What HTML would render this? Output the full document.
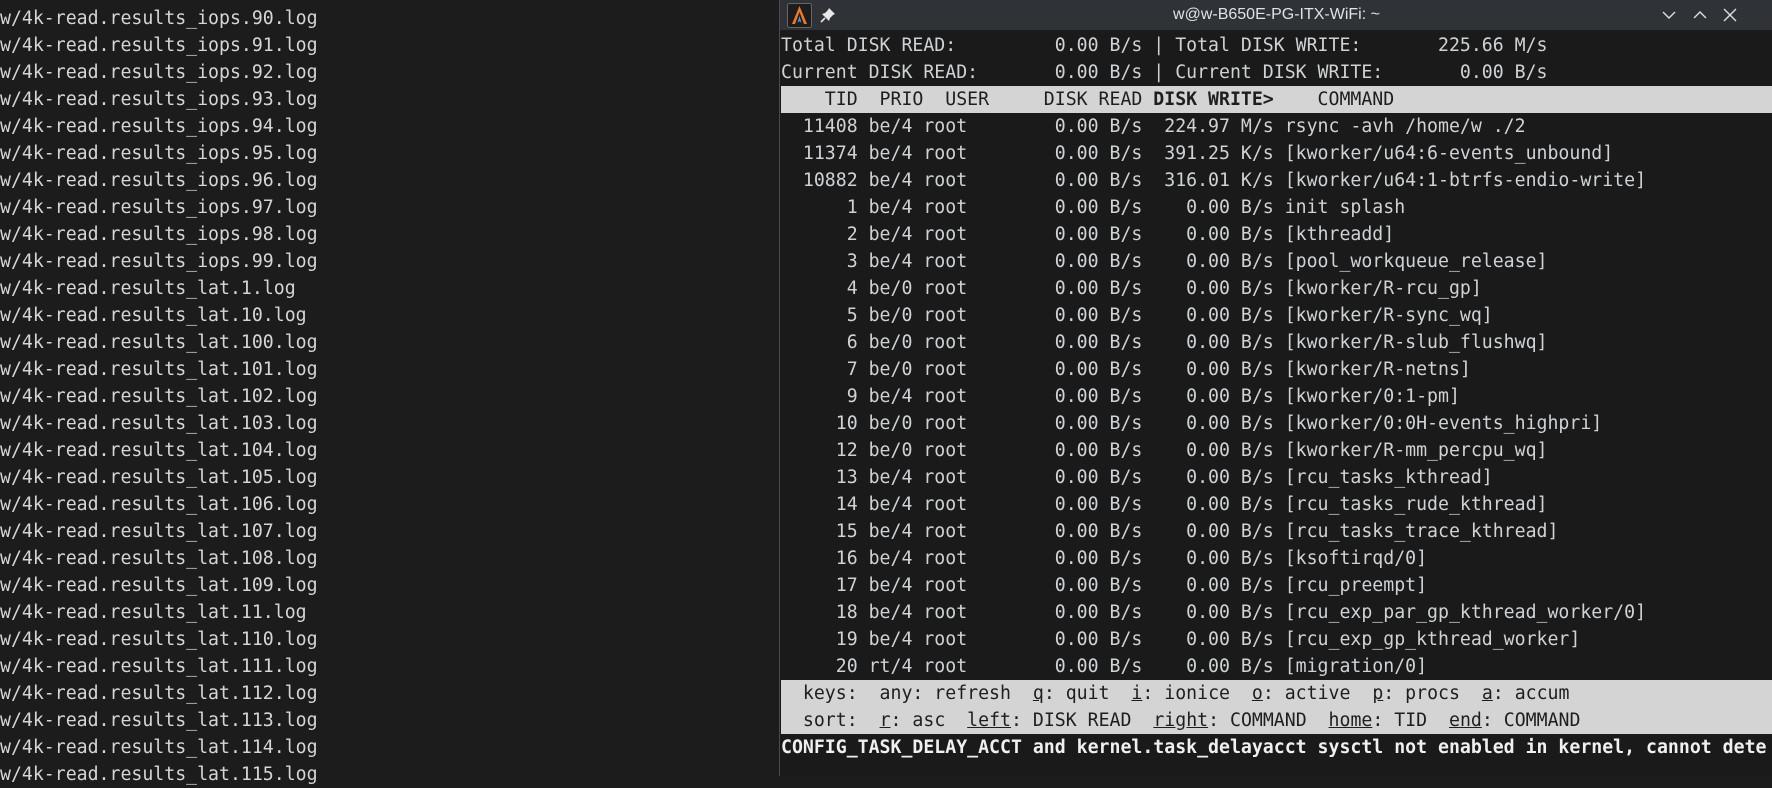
<!DOCTYPE html>
<html><head><meta charset="utf-8">
<style>
*{margin:0;padding:0;box-sizing:border-box}
html,body{width:1772px;height:776px;overflow:hidden;background:#1c1c1c}
.mono{font-family:"DejaVu Sans Mono","Liberation Mono",monospace;font-size:18.2px;white-space:pre;line-height:27px}
#left{position:absolute;left:0;top:4.5px;color:#d6d6d6}
#term{position:absolute;left:779px;top:0;width:993px;height:776px;background:#1a1a1a;border-left:1px solid #4a4a4a}
#title{position:absolute;left:0;top:0;width:993px;height:30px;background:#2f3337}
#title .t{position:absolute;left:0;width:993px;top:0;line-height:30px;text-align:center;font-family:"Liberation Sans",sans-serif;font-size:16px;color:#dfe3e6}
#body{position:absolute;left:1px;top:31.5px;width:992px;color:#cfd3d6}
.bar{background:#d4d4d4;color:#1e1e1e}
b{font-weight:bold}
.u{text-decoration:underline}
.cfg{color:#f0f0f0;font-weight:bold}
</style></head><body>
<div id="left" class="mono">w/4k-read.results_iops.90.log
w/4k-read.results_iops.91.log
w/4k-read.results_iops.92.log
w/4k-read.results_iops.93.log
w/4k-read.results_iops.94.log
w/4k-read.results_iops.95.log
w/4k-read.results_iops.96.log
w/4k-read.results_iops.97.log
w/4k-read.results_iops.98.log
w/4k-read.results_iops.99.log
w/4k-read.results_lat.1.log
w/4k-read.results_lat.10.log
w/4k-read.results_lat.100.log
w/4k-read.results_lat.101.log
w/4k-read.results_lat.102.log
w/4k-read.results_lat.103.log
w/4k-read.results_lat.104.log
w/4k-read.results_lat.105.log
w/4k-read.results_lat.106.log
w/4k-read.results_lat.107.log
w/4k-read.results_lat.108.log
w/4k-read.results_lat.109.log
w/4k-read.results_lat.11.log
w/4k-read.results_lat.110.log
w/4k-read.results_lat.111.log
w/4k-read.results_lat.112.log
w/4k-read.results_lat.113.log
w/4k-read.results_lat.114.log
w/4k-read.results_lat.115.log</div>
<div id="term">
 <div id="title">
  <svg style="position:absolute;left:7px;top:3px" width="25" height="25" viewBox="0 0 25 25">
   <rect x="0.5" y="0.5" width="24" height="24" rx="2" fill="#1d1d1d" stroke="#666"/>
   <path d="M12.5 3 L5 21 L8 21 L12.5 9 L17 21 L20 21 Z" fill="#f07820"/>
   <path d="M12.5 13 L10.5 20 L12.5 18 L14.5 20 Z" fill="#4aa0f0"/>
  </svg>
  <svg style="position:absolute;left:40px;top:7px" width="16" height="16" viewBox="0 0 16 16">
   <path d="M9 1 L15 7 L13 8 L10 11 L9 14 L2 7 L5 6 L8 3 Z" fill="#e8e8e8"/>
   <path d="M5 11 L1 15" stroke="#e8e8e8" stroke-width="1.6"/>
  </svg>
  <div class="t">w@w-B650E-PG-ITX-WiFi: ~</div>
  <svg style="position:absolute;left:881px;top:8px" width="100" height="14" viewBox="0 0 100 14">
   <path d="M2 4 L8 10 L14 4" stroke="#e0e0e0" stroke-width="1.4" fill="none"/>
   <path d="M33 10 L39 4 L45 10" stroke="#e0e0e0" stroke-width="1.4" fill="none"/>
   <path d="M63 1 L75 13 M75 1 L63 13" stroke="#e0e0e0" stroke-width="1.4" fill="none"/>
  </svg>
 </div>
 <div id="body" class="mono"><div>Total DISK READ:         0.00 B/s | Total DISK WRITE:       225.66 M/s</div><div>Current DISK READ:       0.00 B/s | Current DISK WRITE:       0.00 B/s</div><div class="bar">    TID  PRIO  USER     DISK READ <b>DISK WRITE&gt;</b>    COMMAND</div><div>  11408 be/4 root        0.00 B/s  224.97 M/s rsync -avh /home/w ./2
  11374 be/4 root        0.00 B/s  391.25 K/s [kworker/u64:6-events_unbound]
  10882 be/4 root        0.00 B/s  316.01 K/s [kworker/u64:1-btrfs-endio-write]
      1 be/4 root        0.00 B/s    0.00 B/s init splash
      2 be/4 root        0.00 B/s    0.00 B/s [kthreadd]
      3 be/4 root        0.00 B/s    0.00 B/s [pool_workqueue_release]
      4 be/0 root        0.00 B/s    0.00 B/s [kworker/R-rcu_gp]
      5 be/0 root        0.00 B/s    0.00 B/s [kworker/R-sync_wq]
      6 be/0 root        0.00 B/s    0.00 B/s [kworker/R-slub_flushwq]
      7 be/0 root        0.00 B/s    0.00 B/s [kworker/R-netns]
      9 be/4 root        0.00 B/s    0.00 B/s [kworker/0:1-pm]
     10 be/0 root        0.00 B/s    0.00 B/s [kworker/0:0H-events_highpri]
     12 be/0 root        0.00 B/s    0.00 B/s [kworker/R-mm_percpu_wq]
     13 be/4 root        0.00 B/s    0.00 B/s [rcu_tasks_kthread]
     14 be/4 root        0.00 B/s    0.00 B/s [rcu_tasks_rude_kthread]
     15 be/4 root        0.00 B/s    0.00 B/s [rcu_tasks_trace_kthread]
     16 be/4 root        0.00 B/s    0.00 B/s [ksoftirqd/0]
     17 be/4 root        0.00 B/s    0.00 B/s [rcu_preempt]
     18 be/4 root        0.00 B/s    0.00 B/s [rcu_exp_par_gp_kthread_worker/0]
     19 be/4 root        0.00 B/s    0.00 B/s [rcu_exp_gp_kthread_worker]
     20 rt/4 root        0.00 B/s    0.00 B/s [migration/0]</div><div class="bar">  keys:  any: refresh  <span class="u">q</span>: quit  <span class="u">i</span>: ionice  <span class="u">o</span>: active  <span class="u">p</span>: procs  <span class="u">a</span>: accum
  sort:  <span class="u">r</span>: asc  <span class="u">left</span>: DISK READ  <span class="u">right</span>: COMMAND  <span class="u">home</span>: TID  <span class="u">end</span>: COMMAND</div><div class="cfg">CONFIG_TASK_DELAY_ACCT and kernel.task_delayacct sysctl not enabled in kernel, cannot dete</div></div>
</div>
</body></html>
